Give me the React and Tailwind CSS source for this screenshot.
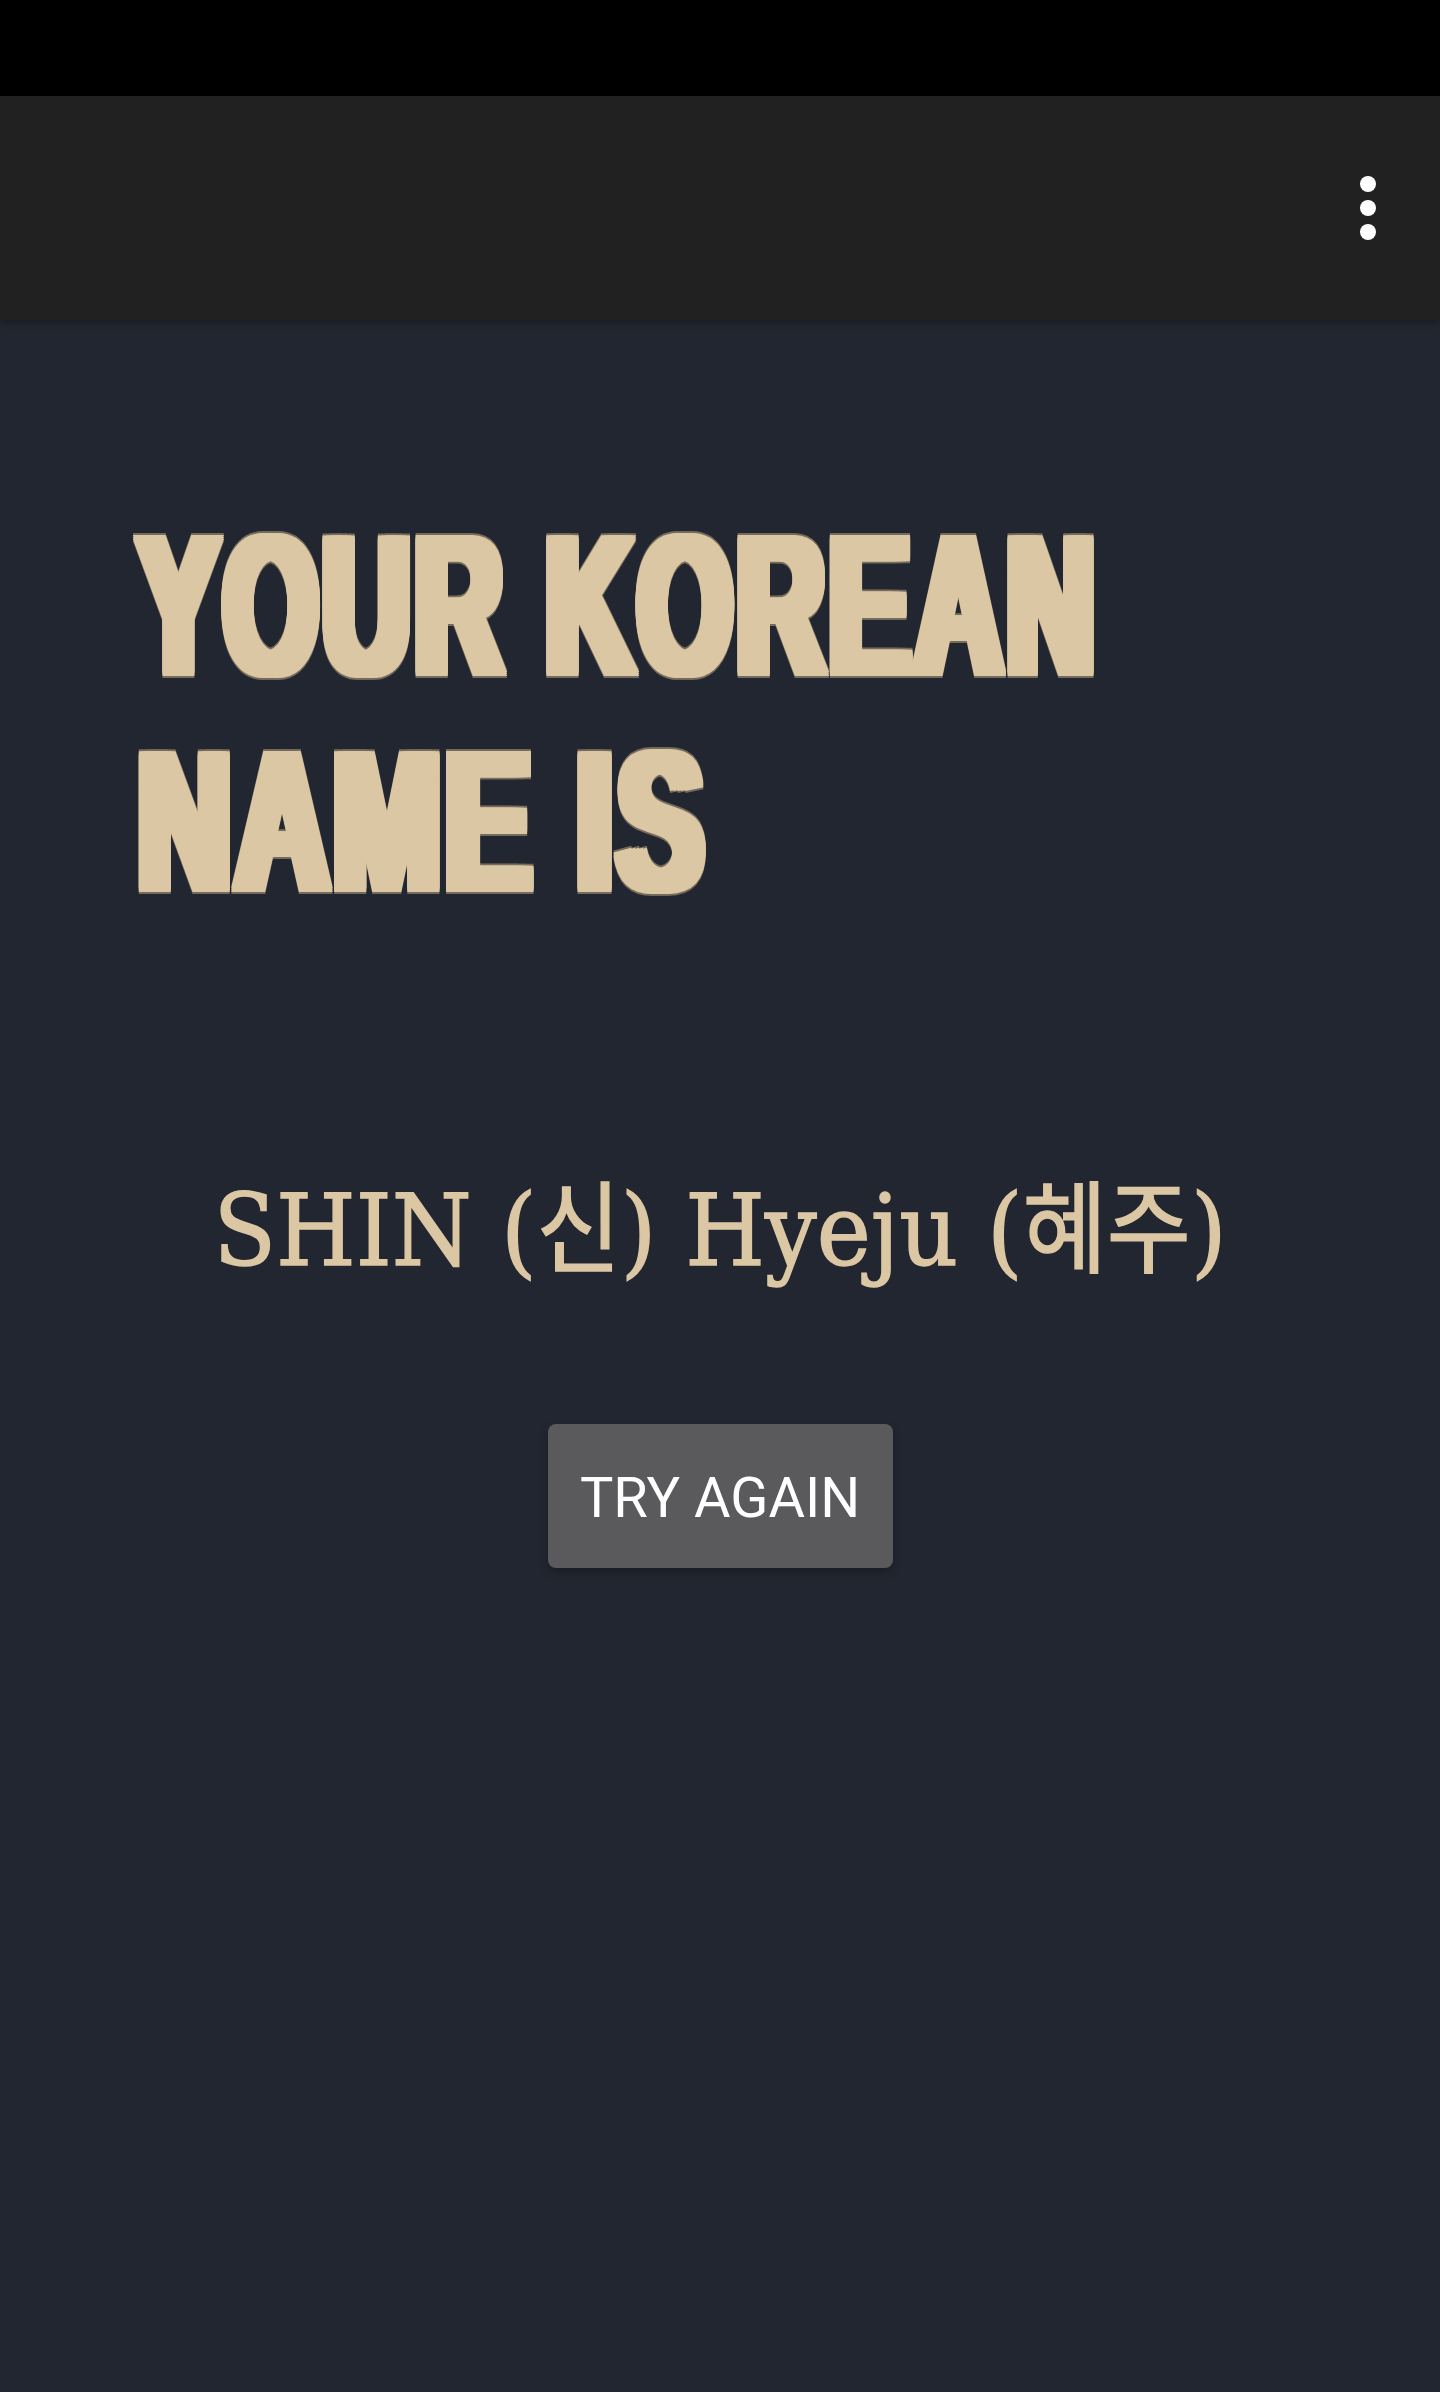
import React from 'react';

const Dots = () => (
  <div className="flex flex-col gap-2">
    <span className="block h-4 w-4 rounded-full bg-white" />
    <span className="block h-4 w-4 rounded-full bg-white" />
    <span className="block h-4 w-4 rounded-full bg-white" />
  </div>
);

export default function App() {
  return (
    <div className="flex h-[2392px] w-[1440px] flex-col overflow-hidden bg-[#222630]">
      <div className="h-24 bg-black" />
      <header className="z-10 flex h-56 items-center justify-end bg-[#212121] pr-16 shadow-[0_3px_6px_rgba(0,0,0,0.25)]">
        <Dots />
      </header>

      <main className="flex flex-col">
        <div className="mt-[178px] pl-[138px]">
          <h1 className="flex flex-col font-['Liberation_Sans',sans-serif] text-[198px] leading-[216px] font-bold tracking-[8px] whitespace-nowrap text-[#dcc7a4] [text-shadow:-12px_-2px_0_#dcc7a4,-6px_-2px_0_#dcc7a4,0_-2px_0_#dcc7a4,6px_-2px_0_#dcc7a4,12px_-2px_0_#dcc7a4,-12px_0_0_#dcc7a4,-6px_0_0_#dcc7a4,6px_0_0_#dcc7a4,12px_0_0_#dcc7a4,-12px_2px_0_#dcc7a4,-6px_2px_0_#dcc7a4,0_2px_0_#dcc7a4,6px_2px_0_#dcc7a4,12px_2px_0_#dcc7a4,-12px_-4px_0_#756b5c,0_-4px_0_#756b5c,12px_-4px_0_#756b5c,-12px_4px_0_#756b5c,0_4px_0_#756b5c,12px_4px_0_#756b5c]">
            <span className="origin-top-left scale-x-[0.611]">YOUR KOREAN</span>
            <span className="origin-top-left scale-x-[0.647]">NAME IS</span>
          </h1>
        </div>

        <p className="mt-[241px] scale-x-[0.914] text-center font-['DejaVu_Serif','Noto_Sans_CJK_KR',serif] text-[100px] leading-[120px] whitespace-nowrap text-[#dcc7a4] [-webkit-text-stroke:1.5px_#dcc7a4]">
          SHIN (신) Hyeju (혜주)
        </p>

        <button className="mx-auto mt-[133px] flex h-36 w-[345px] items-center justify-center rounded-lg bg-[#5a5a5c] pt-1 font-['Roboto',sans-serif] text-[56px] text-white shadow-[0_4px_8px_rgba(0,0,0,0.25)]">
          TRY AGAIN
        </button>
      </main>
    </div>
  );
}
